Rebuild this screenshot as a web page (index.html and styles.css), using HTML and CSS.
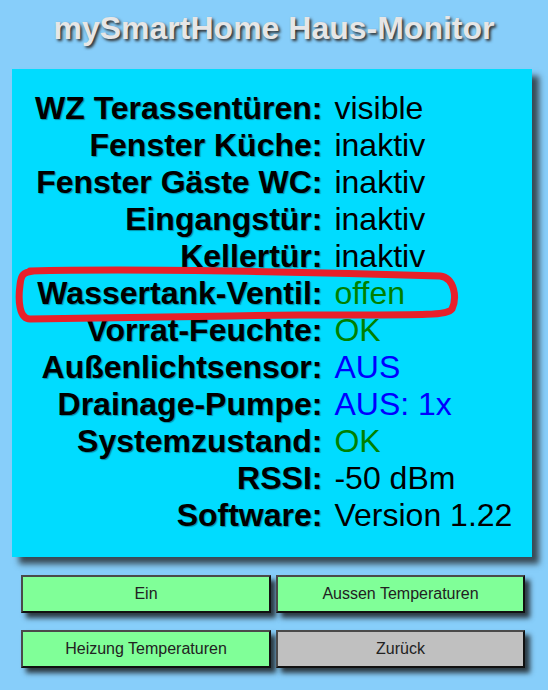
FILE: index.html
```html
<!DOCTYPE html>
<html lang="de">
<head>
<meta charset="utf-8">
<title>mySmartHome Haus-Monitor</title>
<link rel="stylesheet" href="styles.css">
</head>
<body>
<div class="page">
  <h1 class="title">mySmartHome Haus-Monitor</h1>
  <div class="panel">
    <div class="grid">
      <div class="lbl">WZ Terassentüren:</div><div class="val">visible</div>
      <div class="lbl">Fenster Küche:</div><div class="val">inaktiv</div>
      <div class="lbl">Fenster Gäste WC:</div><div class="val">inaktiv</div>
      <div class="lbl">Eingangstür:</div><div class="val">inaktiv</div>
      <div class="lbl">Kellertür:</div><div class="val">inaktiv</div>
      <div class="lbl">Wassertank-Ventil:</div><div class="val green">offen</div>
      <div class="lbl">Vorrat-Feuchte:</div><div class="val green">OK</div>
      <div class="lbl">Außenlichtsensor:</div><div class="val blue">AUS</div>
      <div class="lbl">Drainage-Pumpe:</div><div class="val blue">AUS: 1x</div>
      <div class="lbl">Systemzustand:</div><div class="val green">OK</div>
      <div class="lbl">RSSI:</div><div class="val">-50 dBm</div>
      <div class="lbl">Software:</div><div class="val">Version 1.22</div>
    </div>
  </div>
  <div class="buttons">
    <div class="btn">Ein</div>
    <div class="btn">Aussen Temperaturen</div>
    <div class="btn">Heizung Temperaturen</div>
    <div class="btn gray">Zurück</div>
  </div>
  <svg class="mark" width="548" height="690" viewBox="0 0 548 690" xmlns="http://www.w3.org/2000/svg">
    <path d="M 30 271 C 150 268, 350 273, 440 276 C 455 278, 457 298, 452 309 C 447 316, 420 315, 300 315 C 200 316, 80 319, 30 319 C 19 319, 18 300, 20 285 C 21 276, 22 272, 34 271"
          fill="none" stroke="#e8202a" stroke-width="7" stroke-linecap="round" stroke-linejoin="round"/>
  </svg>
</div>
</body>
</html>
```

FILE: styles.css
```css
html, body {
  margin: 0;
  padding: 0;
  background: #87cefa;
}
body {
  font-family: "Liberation Sans", Arial, sans-serif;
  width: 548px;
  height: 690px;
  overflow: hidden;
}
.page {
  position: relative;
  width: 548px;
  height: 690px;
  padding-top: 10px;
  box-sizing: border-box;
}
.title {
  margin: 0;
  text-align: center;
  font-size: 32px;
  font-weight: bold;
  color: #e6e6e6;
  text-shadow: 2px 2px 3px #2e2e2e;
  line-height: normal;
}
.panel {
  margin: 22px 0 0 12px;
  width: 520px;
  height: 488px;
  box-sizing: border-box;
  background: #00dcff;
  box-shadow: 7px 7px 6px rgba(30, 30, 30, 0.75);
  padding: 21px 0 0 23px;
}
.grid {
  display: grid;
  grid-template-columns: auto auto;
  column-gap: 12px;
  justify-content: start;
  font-size: 32px;
  line-height: normal;
  color: #000;
}
.lbl {
  font-weight: bold;
  text-align: right;
  text-shadow: 1px 1px 1px rgba(0, 0, 0, 0.35);
}
.val {
  font-weight: normal;
}
.green { color: #008000; }
.blue { color: #0000ff; }
.buttons {
  margin: 18px 0 0 21px;
  width: 504px;
  display: grid;
  grid-template-columns: 250px 249px;
  column-gap: 5px;
  row-gap: 17px;
}
.btn {
  height: 38px;
  box-sizing: border-box;
  background: #80ff98;
  border: 2px solid;
  border-color: #4a4a4a #111 #111 #4a4a4a;
  box-shadow: 5px 5px 5px rgba(20, 20, 20, 0.8);
  display: flex;
  align-items: center;
  justify-content: center;
  font-size: 16px;
  color: #222;
}
.btn.gray {
  background: #c0c0c0;
}
.mark {
  position: absolute;
  left: 0;
  top: 0;
  pointer-events: none;
}
```
